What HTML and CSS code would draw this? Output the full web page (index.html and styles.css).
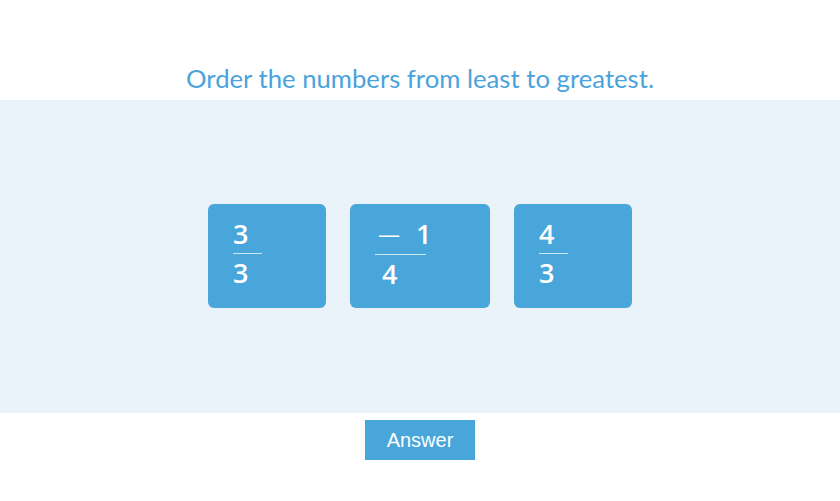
FILE: index.html
```html
<!DOCTYPE html>
<html>
<head>
<meta charset="utf-8">
<link rel="stylesheet" href="styles.css">
</head>
<body>
<header class="head">
  <h1 class="title">Order the numbers from least to greatest.</h1>
</header>
<main class="panel">
  <div class="card">
    <div class="frac">
      <span class="num">3</span>
      <span class="bar"></span>
      <span class="den">3</span>
    </div>
  </div>
  <div class="card wide">
    <div class="frac neg">
      <span class="num"><span class="minus">—</span><span class="one">1</span></span>
      <span class="bar long"></span>
      <span class="den shift">4</span>
    </div>
  </div>
  <div class="card">
    <div class="frac">
      <span class="num">4</span>
      <span class="bar"></span>
      <span class="den">3</span>
    </div>
  </div>
</main>
<div class="actions">
  <button class="answer">Answer</button>
</div>
</body>
</html>
```
FILE: styles.css
```css
html, body {
  margin: 0;
  padding: 0;
  background: #ffffff;
}
body {
  width: 840px;
  height: 501px;
  overflow: hidden;
  font-family: "Lato", "Open Sans", sans-serif;
}
.head {
  height: 100px;
  display: flex;
  align-items: flex-end;
  justify-content: center;
}
.title {
  margin: 0 0 7px 0;
  font-weight: 400;
  font-size: 25.7px;
  line-height: 30px;
  color: #4aa3dc;
}
.panel {
  height: 313px;
  box-sizing: border-box;
  padding-bottom: 1px;
  background: #eaf3fa;
  display: flex;
  align-items: center;
  justify-content: center;
  gap: 24px;
}
.card {
  width: 118px;
  height: 104px;
  box-sizing: border-box;
  background: #48a6db;
  border-radius: 6px;
  padding: 16px 0 0 25px;
  color: #ffffff;
}
.card.wide {
  width: 140px;
}
.frac {
  display: flex;
  flex-direction: column;
  align-items: flex-start;
  font-family: "Open Sans", sans-serif;
  font-weight: 600;
  font-size: 27px;
  line-height: 28px;
}
.bar {
  display: block;
  width: 29px;
  height: 1px;
  background: #cfe6f5;
  margin: 5px 0 5px 0;
}
.bar.long {
  width: 51px;
}
.minus {
  font-weight: 400;
  font-size: 22px;
  display: inline-block;
  width: 22px;
  margin-left: 3px;
  position: relative;
  top: -2px;
}
.one {
  margin-left: 16px;
}
.den.shift {
  margin-left: 7px;
}
.actions {
  display: flex;
  justify-content: center;
  padding-top: 7px;
}
.answer {
  width: 110px;
  height: 40px;
  border: none;
  background: #48a6db;
  color: #ffffff;
  font-family: "Liberation Sans", Arial, sans-serif;
  font-size: 20px;
  padding: 0;
}
```
